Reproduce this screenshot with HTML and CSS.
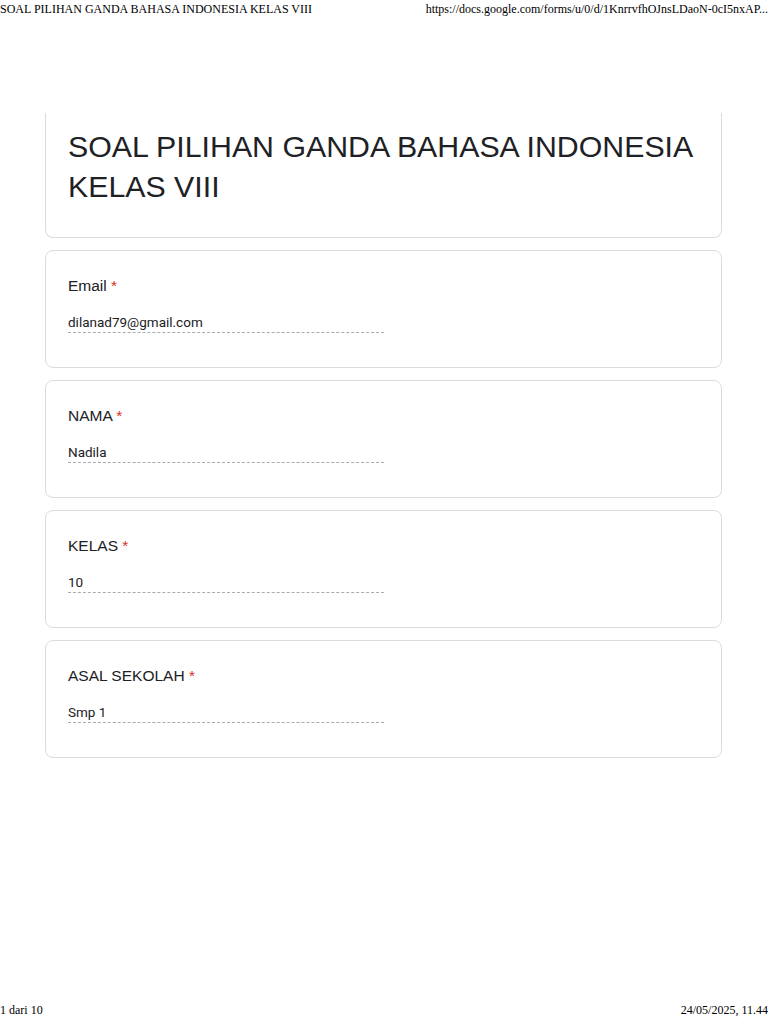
FILE: index.html
```html
<!DOCTYPE html>
<html lang="id">
<head>
    <meta charset="UTF-8">
    <meta name="viewport" content="width=device-width, initial-scale=1.0">
    <title>SOAL PILIHAN GANDA BAHASA INDONESIA KELAS VIII</title>
    <link rel="stylesheet" href="styles.css">
</head>
<body>
    <div class="page">
        <div class="print-header">
            <span>SOAL PILIHAN GANDA BAHASA INDONESIA KELAS VIII</span>
            <span>https://docs.google.com/forms/u/0/d/1KnrrvfhOJnsLDaoN-0cI5nxAP...</span>
        </div>

        <div class="form">
            <div class="card title-card">
                <h1>SOAL PILIHAN GANDA BAHASA INDONESIA KELAS VIII</h1>
            </div>

            <div class="card question">
                <div class="label">Email <span class="required">*</span></div>
                <div class="answer">dilanad79@gmail.com</div>
            </div>

            <div class="card question">
                <div class="label">NAMA <span class="required">*</span></div>
                <div class="answer">Nadila</div>
            </div>

            <div class="card question">
                <div class="label">KELAS <span class="required">*</span></div>
                <div class="answer">10</div>
            </div>

            <div class="card question">
                <div class="label">ASAL SEKOLAH <span class="required">*</span></div>
                <div class="answer">Smp 1</div>
            </div>
        </div>

        <div class="print-footer">
            <span>1 dari 10</span>
            <span>24/05/2025, 11.44</span>
        </div>
    </div>
</body>
</html>
```

FILE: styles.css
```css
:root {
    --text-color: #202124;
    --border-color: #dadce0;
    --required-color: #d93025;
    --dash-color: #a8abb0;
}

body, html {
    margin: 0;
    padding: 0;
    background-color: #ffffff;
}

.page {
    height: 1024px;
    display: flex;
    flex-direction: column;
    box-sizing: border-box;
}

.print-header, .print-footer {
    display: flex;
    justify-content: space-between;
    font-family: 'Liberation Serif', serif;
    font-size: 12px;
    color: #000000;
    height: 16px;
    line-height: 16px;
}

.print-header {
    padding-top: 1px;
}

.print-footer {
    margin-top: auto;
    line-height: 17px;
    height: 22px;
}

.form {
    display: flex;
    flex-direction: column;
    gap: 12px;
    padding: 96px 46px 0 45px;
}

.card {
    background-color: #ffffff;
    border: 1px solid var(--border-color);
    border-radius: 8px;
    box-sizing: border-box;
    padding: 0 22px;
}

.title-card {
    border-top: none;
    border-top-left-radius: 0;
    border-top-right-radius: 0;
    height: 125px;
    padding-top: 14px;
}

h1 {
    margin: 0;
    font-family: 'Liberation Sans', Arial, sans-serif;
    font-weight: normal;
    font-size: 30.3px;
    line-height: 40px;
    color: var(--text-color);
}

.question {
    height: 118px;
    padding-top: 23px;
}

.label {
    font-family: 'Liberation Sans', Arial, sans-serif;
    font-size: 15.5px;
    line-height: 24px;
    color: var(--text-color);
}

.required {
    color: var(--required-color);
}

.answer {
    margin-top: 15px;
    width: 316px;
    font-family: Roboto, sans-serif;
    font-size: 13.5px;
    line-height: 18px;
    color: var(--text-color);
    border-bottom: 1px dashed var(--dash-color);
    padding-bottom: 1px;
}
```
